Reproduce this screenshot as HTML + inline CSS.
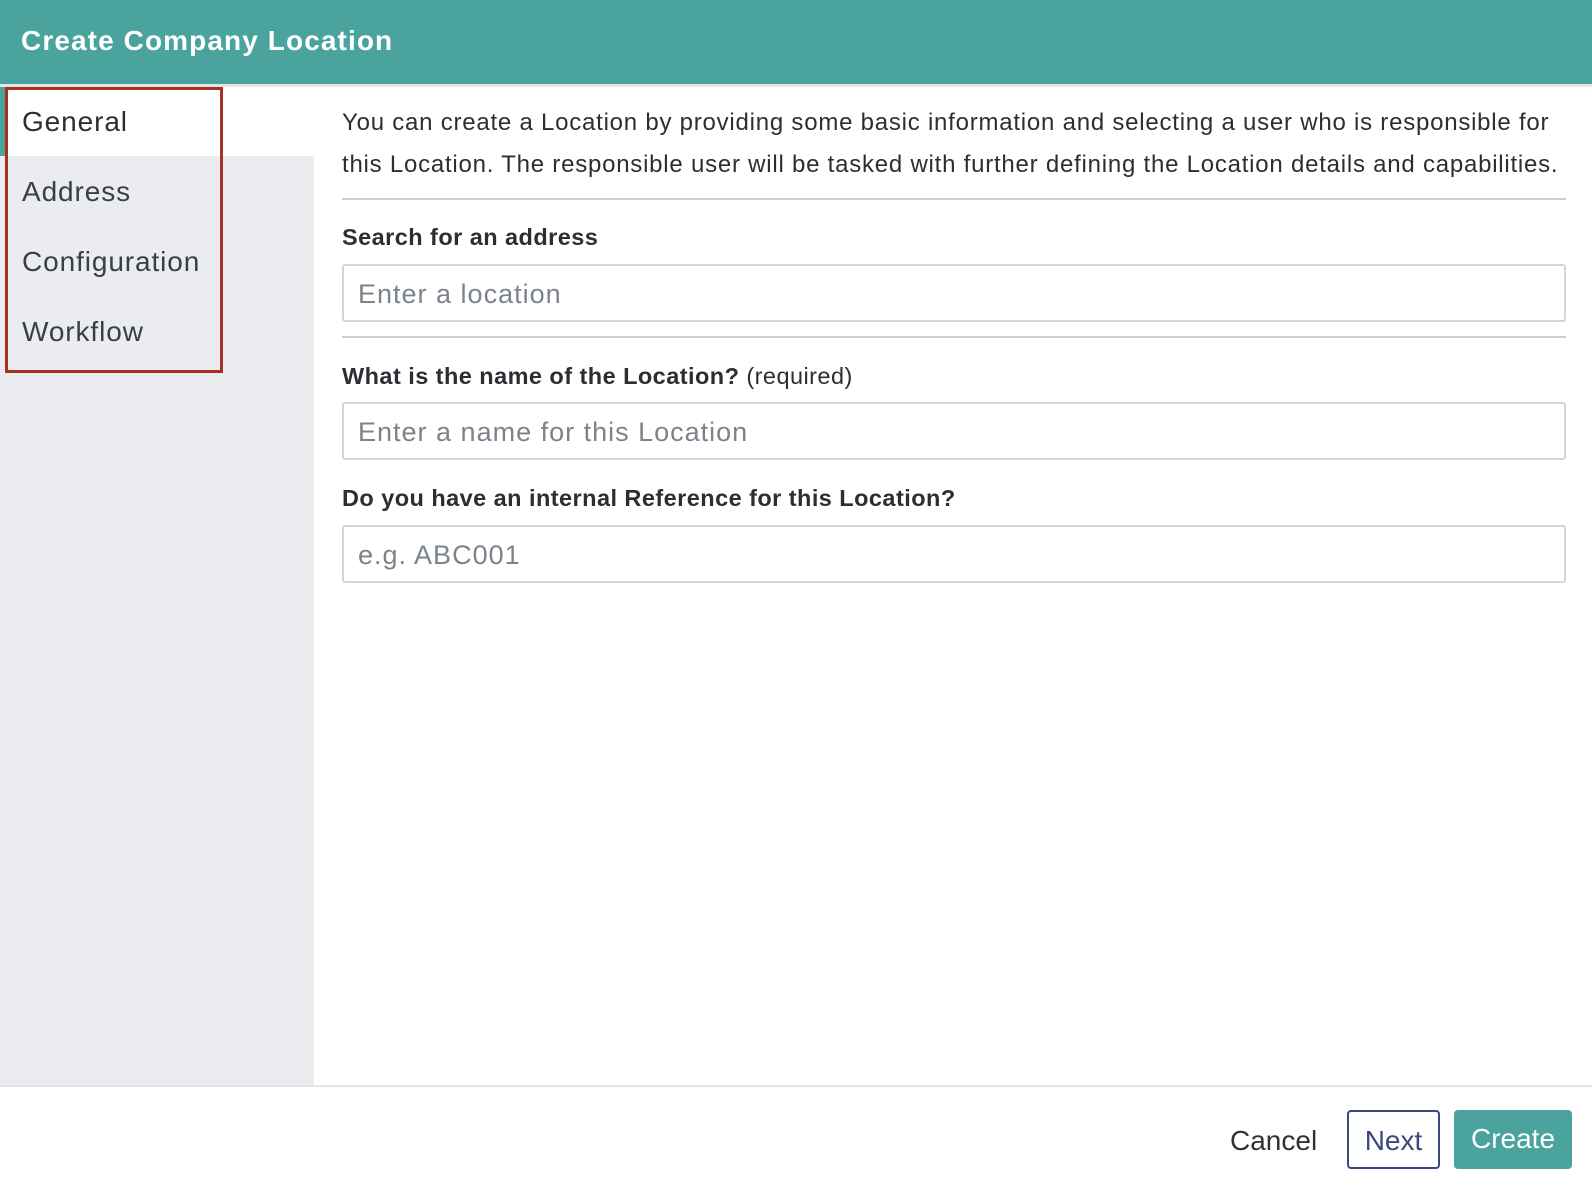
<!DOCTYPE html>
<html><head><meta charset="utf-8"><style>
*{margin:0;padding:0;box-sizing:border-box}
body{width:1592px;height:1192px;position:relative;background:#fff;font-family:"Liberation Sans",sans-serif;color:#2f3337;overflow:hidden}
.a{position:absolute;white-space:nowrap}
.hdr{left:0;top:0;width:1592px;height:84px;background:#4ba39d}
.hdr span{position:absolute;left:21px;top:25px;font-size:28px;font-weight:bold;color:#fff;letter-spacing:1.1px}
.hl{left:0;top:84px;width:1592px;height:3px;background:#e3e4e8}
.side{left:0;top:156px;width:314px;height:930px;background:#ebecef}
.act{left:0;top:87px;width:6px;height:69px;background:#4ba39d}
.nav{left:22px;font-size:28px;color:#3a3f45;letter-spacing:0.9px}
.red{left:5px;top:87px;width:218px;height:286px;border:3px solid #a93120}
.p{left:342px;font-size:24px;color:#2b2f33;letter-spacing:0.77px}
.sep{left:342px;width:1224px;height:2px;background:#cfd1d4}
.lbl{left:342px;font-size:23.5px;font-weight:bold;color:#2b2f33;letter-spacing:0.45px}
.in{left:342px;width:1224px;height:58px;border:2px solid #d3d5d8;border-radius:3px;font-size:27px;color:#7c838b;padding:13px 0 0 14px;letter-spacing:1px}
.fl{left:0;top:1085px;width:1592px;height:2px;background:#e3e4e8}
.btn{top:1110px;height:59px;border-radius:4px;font-size:28px;text-align:center;line-height:57px}
</style></head><body>
<div class="a hdr"><span>Create Company Location</span></div>
<div class="a hl"></div>
<div class="a side"></div>
<div class="a act"></div>
<div class="a nav" style="top:106px;color:#2b2f33">General</div>
<div class="a nav" style="top:176px">Address</div>
<div class="a nav" style="top:246px">Configuration</div>
<div class="a nav" style="top:316px">Workflow</div>
<div class="a red"></div>
<div class="a p" style="top:109px">You can create a Location by providing some basic information and selecting a user who is responsible for</div>
<div class="a p" style="top:151px">this Location. The responsible user will be tasked with further defining the Location details and capabilities.</div>
<div class="a sep" style="top:198px"></div>
<div class="a lbl" style="top:224px">Search for an address</div>
<div class="a in" style="top:264px">Enter a location</div>
<div class="a sep" style="top:336px"></div>
<div class="a lbl" style="top:363px">What is the name of the Location? <span style="font-weight:normal">(required)</span></div>
<div class="a in" style="top:402px">Enter a name for this Location</div>
<div class="a lbl" style="top:485px">Do you have an internal Reference for this Location?</div>
<div class="a in" style="top:525px">e.g. ABC001</div>
<div class="a fl"></div>
<div class="a" style="left:1230px;top:1125px;font-size:28px;color:#2f3337">Cancel</div>
<div class="a btn" style="left:1347px;width:93px;border:2px solid #3b4a7a;color:#3b4a7a">Next</div>
<div class="a btn" style="left:1454px;width:118px;background:#4ba39d;color:#fff">Create</div>
</body></html>
